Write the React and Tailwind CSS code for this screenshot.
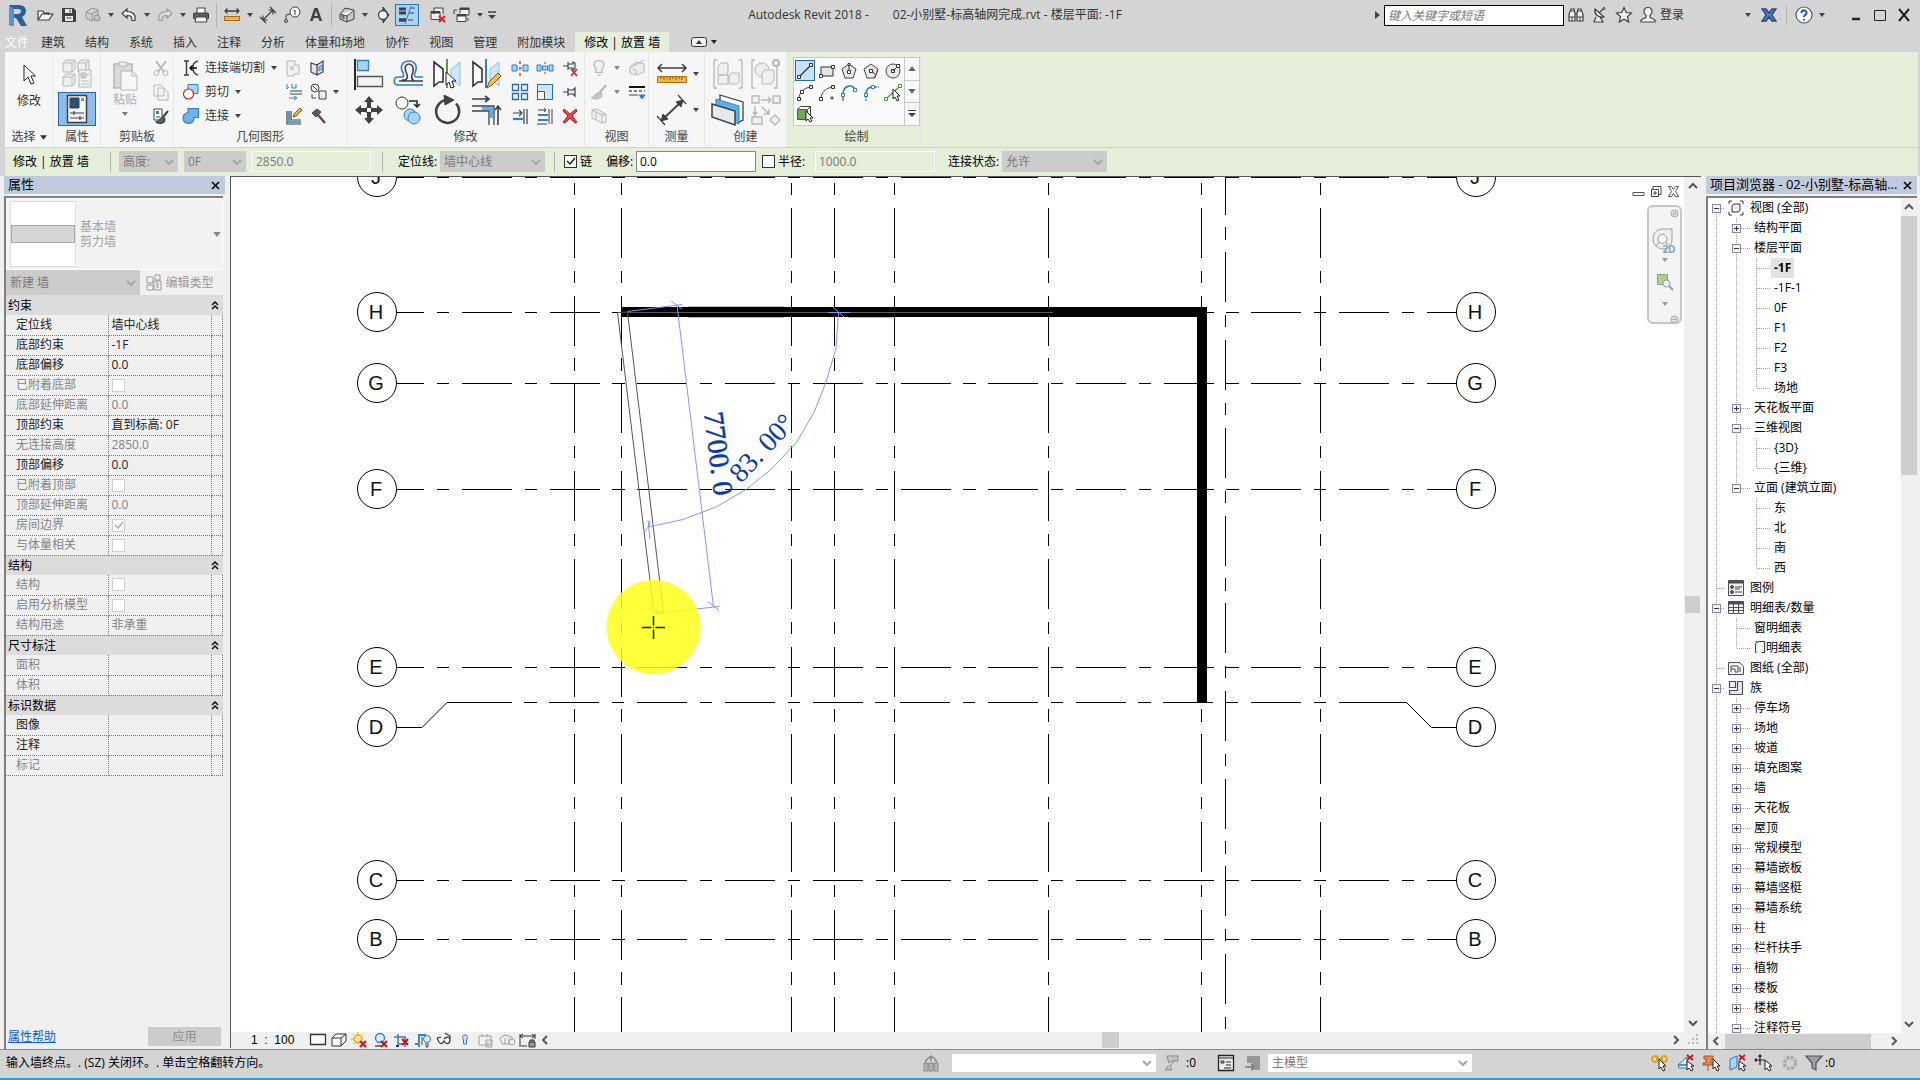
import React, { useState } from "react";

const DARK = "#3c4147";
const BLUE = "#2f7fc8";
const LIGHT = "#a9d4f2";
const GRAY = "#b4b7b9";

// every drawing is [width, height, content]
const icons = {
  logo: [22, 24, <g stroke="none"><path d="M3 2h9c5 0 8 2 8 6 0 3-2 5-4 6l5 9h-6l-5-8H8v8l-5-1z" fill="#2c5f9e" /><path d="M8 6h4c2 0 3 1 3 2s-1 3-3 3H8z" fill="#d4d4d4" /><path d="M3 2l5 4v17l-5-2z" fill="#5d92c8" /></g>],
  open: [18, 16, <path d="M2 13V4h5l1 2h5v2M2 13l4-6h11l-4 6z" fill="#f4f4f4" stroke={DARK} strokeWidth="1.2" />],
  save: [16, 16, <><path d="M1.500 1.500h11l2 2v11h-13z" fill={DARK} stroke={DARK} /><path d="M4 2h7v4H4zM4 9h8v5H4z" fill="#e8e8e8" stroke="none" /><path d="M9 2.500v3M5.500 11h5" stroke={DARK} /></>],
  sync: [18, 18, <><path d="M2 6l6-4 6 2v7l-6 4-6-3z" fill="#cfd0d0" stroke="#909396" /><path d="M2 6l6 2 6-4M8 8v7" stroke="#909396" /><circle cx="13" cy="12" r="3" fill="#c2c4c5" stroke="#8d9092" /></>],
  undo: [18, 16, <path d="M7 2L2 6.500 7 11V8.500c4 0 5 1 5 5h3c1-6-2-9-8-9z" fill="#f4f4f4" stroke={DARK} strokeWidth="1.2" />],
  redo: [18, 16, <path d="M11 2l5 4.500L11 11V8.500c-4 0-5 1-5 5H3c-1-6 2-9 8-9z" fill="#dcdcdc" stroke="#97999b" strokeWidth="1.100" />],
  print: [18, 18, <><path d="M5 7V2h8v5" fill="#fff" stroke={DARK} /><rect x="1.500" y="7" width="15" height="6" rx="1" fill="#5b6066" stroke={DARK} /><path d="M4 11h10l1 5H3z" fill="#f4f4f4" stroke={DARK} /></>],
  ruler: [18, 16, <><path d="M2 4h14M4.500 1.500L2 4l2.500 2.500M13.500 1.500L16 4l-2.500 2.500" stroke={DARK} strokeWidth="1.300" /><rect x="1.500" y="9.500" width="15" height="4" fill="#f0b23a" stroke="#a86f12" /></>],
  dim: [18, 18, <path d="M4 14L14 4M9.500 4H14v4.500M4 9.500V14h4.500M1 11l6 6M11 1l6 6" stroke={DARK} strokeWidth="1.200" />],
  tag: [18, 18, <><circle cx="12" cy="6" r="5" fill="#f6f6f6" stroke={DARK} /><path d="M10.500 5L12 4v5M7 8l-4 1v5" stroke={DARK} /><circle cx="3" cy="15" r="1.500" stroke={DARK} /></>],
  house: [18, 18, <><path d="M2 8l5-6 9 2v9l-7 3-7-3z" fill="#c5c9cc" stroke={DARK} /><path d="M2 8l7 2 7-6M9 10v6M4 9.500v2l2 1v-2z" stroke={DARK} fill="#fff" /></>],
  section: [18, 18, <><path d="M9 1l6 8-6 8z" fill={DARK} stroke={DARK} /><circle cx="9" cy="9" r="4.500" fill="#f2f2f2" stroke={DARK} strokeWidth="1.300" /></>],
  thin: [18, 18, <><path d="M1 3h7M1 7h7" stroke={DARK} strokeWidth="3" /><path d="M1 14h7" stroke={DARK} strokeWidth="3.500" /><path d="M12 2h5M11 7h5M10 14h5" stroke={DARK} /><path d="M13 0L7 18" stroke={BLUE} /></>],
  closeWin: [18, 18, <><path d="M5 8V2h9v6M2 5.500h9v8H2z" fill="#eee" stroke={DARK} /><path d="M2 6.500h9" stroke={DARK} strokeWidth="2" /><path d="M10 10l6 6M16 10l-6 6" stroke="#d8262c" strokeWidth="2.200" /></>],
  switchWin: [18, 18, <><path d="M7 7V2h9v7h-3" fill="#eee" stroke={DARK} /><path d="M4 8.500h9v7H4z" fill="#f7f7f7" stroke={DARK} /><path d="M7 3h9M4 9.500h9" stroke={DARK} strokeWidth="2" /><path d="M1 8V4h3M15 12v3" stroke={DARK} /></>],
  custom: [12, 12, <><path d="M2 3h8" stroke={DARK} strokeWidth="1.500" /><path d="M2 6h8l-4 4z" fill={DARK} stroke="none" /></>],
  binoculars: [18, 18, <><path d="M2 15V8l2-5h3l1 4v8zM16 15V8l-2-5h-3l-1 4v8z" fill="#eee" stroke={DARK} strokeWidth="1.200" /><path d="M8 8h2M2 11h6M10 11h6M4 5h3M11 5h3M5 11v4M13 11v4" stroke={DARK} /></>],
  dish: [18, 18, <><path d="M4 3c-1 5 3 9 9 8zM5 11l-2 5h9l-3-5M8 7l4-4" fill="#eee" stroke={DARK} strokeWidth="1.200" /><circle cx="13" cy="2.500" r="1" stroke={DARK} /></>],
  star: [18, 18, <path d="M9 1.500l2.200 5 5.300.5-4 3.600 1.200 5.400L9 13.200 4.300 16l1.200-5.400-4-3.600 5.300-.5z" fill="#eee" stroke={DARK} strokeWidth="1.200" />],
  user: [18, 18, <path d="M9 1.500c5 0 5 5.500 2 8v2l5 2.500v2H2v-2L7 11.500v-2c-3-2.500-3-8 2-8z" fill="#f1f1f1" stroke={DARK} strokeWidth="1.200" />],
  exchange: [18, 16, <path d="M2 2h4l3 4 3-4h4l-4 6 4 6h-4l-3-4-3 4H2l4-6z" fill="#5478b8" stroke="#22437f" strokeWidth="1.300" />],
  help: [20, 18, <><ellipse cx="10" cy="9" rx="8" ry="8" fill="#fff" stroke="#4b5a74" strokeWidth="1.200" /><path d="M7.500 7c0-4 5.500-3 5 0 0 1.500-2.500 2-2.500 4M10 13v1.500" stroke="#1f4fbf" strokeWidth="2" /></>],
  min: [12, 16, <path d="M2 12h8" stroke="#222" strokeWidth="2.500" />],
  max: [14, 14, <path d="M1.500 2.500h11v10h-11z" stroke="#222" />],
  close: [14, 14, <path d="M2 1l10 12M12 1L2 13" stroke="#222" strokeWidth="2" />],
  cursor: [14, 22, <path d="M2 1v16l4-4 3 7 3-1-3-7h4.500z" fill="#fff" stroke="#222" />],
  typeProps: [32, 32, <><path d="M2 5l3-3h9v9l-3 3H2zM17 5l3-3h8v9l-3 3h-8zM2 19l3-3h9v9l-3 3H2z" fill="#efefef" stroke={GRAY} /><path d="M2 5h9v9M11 5l3-3M17 5h8v9M25 5l3-3M2 19h9v9M11 19l3-3" stroke={GRAY} /><path d="M18 12h12v17H18z" fill="#f4f4f4" stroke={GRAY} /><path d="M20 15h5v5h-5z" fill="#cfcfcf" stroke={GRAY} /><path d="M20 23h8M20 26h8M27 15v3" stroke={GRAY} /></>],
  props: [22, 30, <><path d="M1.500 1.500h19v27h-19z" fill="#f7f7f7" stroke={DARK} strokeWidth="1.500" /><path d="M4 4h9v10H4z" fill="#2c5078" stroke={DARK} /><path d="M15 4h3v3h-3z" fill="#8a9095" stroke="none" /><path d="M4 19h14M4 24h14M8 17v4M14 22v4" stroke={DARK} strokeWidth="1.200" /></>],
  paste: [28, 32, <><path d="M3 4h18v24H3z" fill="#d9dadb" stroke={GRAY} strokeWidth="1.500" /><path d="M8 2h8v4H8z" fill="#eee" stroke={GRAY} /><path d="M10 11h11l5 5v14H10z" fill="#f7f7f7" stroke={GRAY} /><path d="M21 11v5h5" stroke={GRAY} /></>],
  cut: [18, 18, <><path d="M4 2l8 11M14 2L6 13" stroke={GRAY} strokeWidth="1.800" /><circle cx="4.500" cy="14" r="2.500" stroke={GRAY} /><circle cx="13.500" cy="14" r="2.500" stroke={GRAY} /></>],
  copyDoc: [18, 18, <path d="M2 2h7l3 3v8H2zM6 5h6l4 4v8H6z" fill="#f5f5f5" stroke={GRAY} />],
  brush: [18, 18, <><path d="M2 2h8v11H2z" fill="#fff" stroke={DARK} /><path d="M4 4h3v3H4z" fill={BLUE} stroke="none" /><path d="M4 10h4" stroke={DARK} /><path d="M16 4l-5 6" stroke={DARK} strokeWidth="2" /><path d="M11 10c-4 1-3 4-7 5 4 3 9 1 9-3z" fill="#5d6266" stroke={DARK} strokeWidth="1.200" /></>],
  cope: [18, 18, <><path d="M2 2h5M2 16h5M4.500 2v14M16 2c-5 1-5 4-5 7s1 6 5 7" stroke={DARK} strokeWidth="1.500" /><path d="M15 9H8M10.500 6.500L8 9l2.500 2.500" stroke="#111" strokeWidth="1.500" /></>],
  cutGeo: [18, 18, <><path d="M6 1.500h10v9H6z" fill={LIGHT} stroke={BLUE} /><circle cx="6.500" cy="11" r="5" fill="#fff" stroke="#d0242b" strokeWidth="1.200" /></>],
  joinGeo: [18, 18, <path d="M6 1.500h10.500v9H12a5.500 5.500 0 1 1-6-5z" fill="#6db4e6" stroke={BLUE} strokeWidth="1.200" />],
  unjoin: [18, 18, <path d="M2 2h8v4h4v9H9v2H2zM5 9l3-2v4z" fill="#f0f0f0" stroke={GRAY} />],
  face: [18, 18, <><path d="M2 4l6 2v10l-6-3zM8 6l6-4v11l-6 3" fill="#e8e8e8" stroke={DARK} strokeWidth="1.200" /><path d="M10 8l3-2v4l-3 2z" fill={LIGHT} stroke={BLUE} /></>],
  beam: [18, 18, <><path d="M2 1v5M2 6l2-2M7 1v4h4V1" stroke={BLUE} /><path d="M5 8h12M5 11h12" stroke={DARK} /><path d="M4 15h8M9 13l3 2-3 2" stroke={BLUE} /></>],
  paint: [18, 18, <><circle cx="6" cy="5" r="4" fill="#eee" stroke={DARK} /><path d="M4 3l4 4M10 8h7v8h-7z" fill="#eee" stroke={DARK} /><path d="M3 11v4h4" stroke={DARK} /></>],
  wallJoin: [18, 18, <><path d="M2 4v13h14M6 4v9h10" stroke={DARK} strokeWidth="1.200" /><path d="M4 4v11h12" stroke={BLUE} strokeWidth="1.600" /><path d="M8 10l1-3 6-6 2 2-6 6z" fill="#f0b23a" stroke="#8a5a10" /></>],
  hammer: [18, 18, <><path d="M3 6l5-4 4 3-5 5z" fill="#55595d" stroke={DARK} /><path d="M9 8l7 8" stroke="#6a3b34" strokeWidth="2.200" /></>],
  align: [32, 32, <><path d="M2 1v31" stroke="#111" strokeWidth="1.800" /><path d="M4.500 2.500h11v10h-11z" fill={LIGHT} stroke={BLUE} strokeWidth="1.300" /><path d="M4.500 18.500h25v10h-25z" fill="#f2f2f2" stroke="#555" strokeWidth="1.300" /></>],
  offset: [32, 32, <><path d="M31 27H6c-5 0-5-8 0-8h4c2 0 2-2 1-4-4-7 0-12 6-12s9 5 6 12c-1 2-1 4 2 4h6" stroke={BLUE} strokeWidth="1.600" /><path d="M31 23H7M10 22h3c3-1 3-4 1-8-2-5 0-8 3-8s5 3 4 8c-2 4-2 7 1 9h9" stroke={DARK} strokeWidth="1.600" /></>],
  mirrorPick: [32, 32, <><path d="M3 4l9 7v13H8l-5 4z" fill="#fafafa" stroke="#333" strokeWidth="1.600" /><path d="M29 4l-9 7v13h4l5 4z" fill="#cfe6f7" stroke="#8cc0e6" /><path d="M16 1v29" stroke="#5a9b3c" strokeWidth="2" /><path d="M15 14v13l3-3 2 6 3-1-2-6h4z" fill="#fff" stroke="#222" /></>],
  mirrorDraw: [32, 32, <><path d="M3 4l9 7v13H8l-5 4z" fill="#fafafa" stroke="#333" strokeWidth="1.600" /><path d="M29 4l-9 7v13h4l5 4z" fill="#cfe6f7" stroke="#8cc0e6" /><path d="M16 1v29" stroke={BLUE} strokeWidth="2" /><path d="M17 30l2-6 9-9 3 3-9 9z" fill="#f3c13e" stroke="#7d5212" /></>],
  move: [30, 30, <><path d="M15 1l5 6h-3v5h-4V7h-3zM15 29l5-6h-3v-5h-4v5h-3zM1 15l6-5v3h5v4H7v3zM29 15l-6-5v3h-5v4h5v3z" fill={DARK} stroke="none" /><path d="M12.500 12.500h5v5h-5z" fill="#f6f6f6" stroke={DARK} /></>],
  copy: [30, 30, <><circle cx="9" cy="8" r="6" fill="#fafafa" stroke="#333" /><path d="M16 6h8v5M21 9l3 3 3-3" stroke="#222" strokeWidth="1.500" /><circle cx="17" cy="20" r="6" fill={LIGHT} stroke={BLUE} /><circle cx="21" cy="23" r="6" fill={LIGHT} stroke={BLUE} /></>],
  rotate: [30, 30, <><path d="M17 5A11.500 11.500 0 1 0 24 8.500" stroke={DARK} strokeWidth="2.500" /><path d="M12 0l10 5-9 5z" fill={DARK} stroke={DARK} /></>],
  trim: [32, 32, <><path d="M2 5h17M15 2l4 3-4 3M28 31V12M25 16l3-4 3 4" stroke={DARK} strokeWidth="1.600" /><path d="M2 12h22v19M2 17h17v14" stroke={DARK} strokeWidth="1.300" /><path d="M12 14.500h9.500V24" stroke="#5fb0ea" strokeWidth="3" /></>],
  split: [18, 18, <><path d="M1 6h5v6H1zM12 6h5v6h-5z" fill={LIGHT} stroke={BLUE} /><path d="M9 2v3M9 8v3M9 14v3" stroke="#d0242b" strokeWidth="1.300" /><path d="M6 9h6" stroke={BLUE} strokeDasharray="1 1" /></>],
  splitGap: [18, 18, <><path d="M1 6h4v6H1zM13 6h4v6h-4zM6.500 7h5v4h-5z" fill={LIGHT} stroke={BLUE} /><path d="M9 3v2M9 13v2" stroke="#d0242b" /></>],
  unpin: [18, 18, <><path d="M2 7h5M7 3v8M7 5h5V3l2 1v6l-2 1V9H7" fill="#eee" stroke={DARK} strokeWidth="1.100" /><path d="M10 10l6 7M16 10l-6 7" stroke="#d8262c" strokeWidth="1.800" /></>],
  array: [18, 18, <path d="M1.500 1.500h6v6h-6zM10.500 1.500h6v6h-6zM1.500 10.500h6v6h-6zM10.500 10.500h6v6h-6z" fill="#e3f1fb" stroke="#2b6ca8" strokeWidth="1.300" />],
  scale: [18, 18, <><path d="M1.500 1.500h15v15h-15z" fill="#cfe6f7" stroke="#2b6ca8" /><path d="M1.500 8.500h7v8h-7z" fill="#f7f7f7" stroke="#555" /></>],
  pin: [18, 18, <path d="M2 9h5M7 5v8M7 7h5l2-2v8l-2-2H7" fill="#eee" stroke={DARK} strokeWidth="1.200" />],
  trimOne: [18, 18, <><path d="M2 6h8M8 3l3 3-3 3M13 2v15M16 2v15" stroke={DARK} strokeWidth="1.200" /><path d="M2 12h10" stroke={BLUE} strokeWidth="2.200" /></>],
  trimMany: [18, 18, <><path d="M2 3h8M8 1l2 2-2 2M13 2v15M16 2v15M1 17h10" stroke={DARK} /><path d="M2 8h10M2 13h10" stroke={BLUE} strokeWidth="2" /></>],
  del: [18, 18, <path d="M3 2l6 5 6-5 1 2-5 5 5 6-2 1-5-5-5 5-2-1 5-6-5-5z" fill="#ef4047" stroke="#b7191f" />],
  bulb: [18, 18, <path d="M9 1.500c6 0 6 6 3 8v4H6v-4c-3-2-3-8 3-8zM7 16h4" fill="#f0f0f0" stroke={GRAY} strokeWidth="1.200" />],
  hide: [18, 18, <path d="M2 8l6-5 8 2v8l-7 3-7-2zM5 12c0-3 3-3 3 0v3M16 1L3 8" fill="#eee" stroke={GRAY} />],
  paintGray: [18, 18, <><path d="M16 2l-6 7" stroke={GRAY} strokeWidth="2.200" /><path d="M10 9c-5 1-4 4-8 6 5 2 10 0 10-4z" fill="#c7c9ca" stroke={GRAY} strokeWidth="1.200" /></>],
  linework: [18, 18, <><path d="M1 4h16" stroke="#111" strokeWidth="2" /><path d="M1 8h16" stroke="#111" strokeDasharray="3 2" /><path d="M11 12h6l-3 4z" fill={BLUE} stroke={BLUE} /><path d="M1 12h9" stroke={DARK} /></>],
  box: [18, 18, <path d="M2 3l10 5v8L2 11zM2 3l4-1 10 5v8l-4 1M12 8l4-1M6 5v8" fill="#f0f0f0" stroke={GRAY} />],
  measure: [32, 32, <><path d="M2 10h28M6 6l-4 4 4 4M26 6l4 4-4 4" stroke={DARK} strokeWidth="1.600" /><path d="M1.500 18.500h29v6h-29z" fill="#f2b63d" stroke="#a86f12" /><path d="M5 19v2M8 19v3M11 19v2M14 19v3M17 19v2M20 19v3M23 19v2M26 19v3" stroke="#8a5a10" /></>],
  dimBig: [32, 32, <><path d="M6 26L26 7" stroke={DARK} strokeWidth="1.800" /><path d="M27 6l-2 7-5-5zM5 27l2-7 5 5z" fill={DARK} stroke={DARK} /><path d="M1 22l8 9M22 1l8 9" stroke={DARK} strokeWidth="1.200" /></>],
  group: [32, 32, <><path d="M5 2H2v28h3M27 2h3v28h-3" stroke={GRAY} strokeWidth="1.300" /><path d="M6 8l3-3h7v10l-2 2H6zM6 18l3-1h7v9H6zM17 17l3-2h7v9l-2 2h-8z" fill="#f0f0f0" stroke={GRAY} /></>],
  similar: [32, 32, <><path d="M5 2H2v28h3M27 8v22h-3" stroke={GRAY} strokeWidth="1.300" /><circle cx="12" cy="12" r="7" fill="#eee" stroke={GRAY} /><path d="M12 15l3-3h9v11l-3 3h-9z" fill="#f0f0f0" stroke={GRAY} /><circle cx="26" cy="5" r="3" stroke={GRAY} strokeWidth="2" /></>],
  assembly: [34, 34, <><path d="M9 2l23 7v18l-4 2L9 20z" fill="#fafafa" stroke={DARK} strokeWidth="1.300" /><path d="M5 6l23 7v18L5 22z" fill="#5fb0ea" stroke={BLUE} /><path d="M1 11l23 7v14L1 24z" fill="#e6e9ec" stroke={DARK} strokeWidth="1.500" /></>],
  parts: [32, 32, <path d="M2 2h7v7H2zM23 2h7v7h-7zM2 23h10v7H2zM25 21l5 5-5 5-5-5zM11 6h10M18 3l3 3-3 3M5 12v9M3 18l2 3 2-3M12 13l7 7M19 15v5h-5" fill="#f0f0f0" stroke={GRAY} strokeWidth="1.400" />],
  line: [18, 18, <><path d="M3 15L15 3" stroke="#333" strokeWidth="1.200" /><path d="M1.500 13.500h3v3h-3zM13.500 1.500h3v3h-3z" fill="#fff" stroke="#333" /></>],
  rect: [18, 18, <><path d="M3 5h12v9H3z" fill="#e3e5e7" stroke="#333" /><path d="M1.500 12.500h3v3h-3zM13.500 3.500h3v3h-3z" fill="#fff" stroke="#333" /></>],
  polyIn: [18, 18, <><path d="M9 2l7 5-3 9H5L2 7z" fill="#e6e8ea" stroke="#444" /><path d="M9 9V3M7.500 8.500h3v3h-3zM8 1.500h2v2H8z" stroke="#333" fill="#fff" /></>],
  polyOut: [18, 18, <><path d="M9 2l7 5-3 9H5L2 7z" fill="#e6e8ea" stroke="#444" /><path d="M7.500 7.500h3v3h-3zM10 10l3 2" stroke="#333" fill="#fff" /><path d="M12 16l4-8" stroke="#d0242b" /></>],
  circle: [18, 18, <><circle cx="9" cy="9" r="7" fill="#e6e8ea" stroke="#444" /><path d="M9 9l4-4M7.500 7.500h3v3h-3zM12.500 2.500h3v3h-3z" stroke="#333" fill="#fff" /></>],
  arc3: [18, 18, <><path d="M3 15C3 9 7 4 15 3" stroke="#444" /><path d="M1.500 13.500h3v3h-3zM4.500 6.500h3v3h-3zM13.500 1.500h3v3h-3z" fill="#fff" stroke="#333" /></>],
  arcC: [18, 18, <><path d="M3 15C3 9 7 4 15 3M14 12v4M12 14h4" stroke="#444" /><path d="M1.500 13.500h3v3h-3zM13.500 1.500h3v3h-3z" fill="#fff" stroke="#333" /></>],
  arcT: [18, 18, <><path d="M3 11C3 0 14 0 15 6" stroke={BLUE} strokeWidth="1.600" /><path d="M3 12v5" stroke="#333" /><path d="M1.500 9.500h3v3h-3zM13.500 4.500h3v3h-3z" fill="#fff" stroke={BLUE} /></>],
  fillet: [18, 18, <><path d="M4 11c0-6 2-8 8-8" stroke={BLUE} strokeWidth="1.600" /><path d="M4 12v5M13 3h4" stroke="#333" strokeDasharray="2 1" /><path d="M2.500 9.500h3v3h-3zM9.500 1.500h3v3h-3z" fill="#fff" stroke={BLUE} /></>],
  pick: [18, 18, <><path d="M2 15L16 2" stroke="#5aa53c" strokeWidth="1.600" /><path d="M.5 13.500h3v3h-3zM14.500.5h3v3h-3z" fill="#fff" stroke="#4b9130" /><path d="M9 5v10l2-2 2 4 2-1-2-4h3z" fill="#fff" stroke="#222" /></>],
  pickFace: [18, 18, <><path d="M1.500 4.500h10v10h-10z" fill="#6fa84f" stroke="#3d6e25" /><path d="M1.500 4.500l3-3h10v10l-3 3M11.500 4.500l3-3" stroke="#444" /><path d="M10 6v10l2-2 2 3 2-1-2-3h3z" fill="#fff" stroke="#222" /></>],
  editType: [18, 18, <path d="M2 3h6v6H2zM10 1h5v5h-5zM2 11h6v5H2zM9 7h7v9H9zM11 9h2v2h-2M11 13h3" stroke="#9a9a9a" />],
  views: [16, 16, <><path d="M1 4V1h3M12 1h3v3M15 12v3h-3M4 15H1v-3" stroke="#333" /><path d="M4 6l2-2h6v6l-2 2H4z" fill="#eee" stroke="#333" /></>],
  legend: [16, 16, <><path d="M.5.5h15v15H.5z" fill="#f2f2f2" stroke="#4a4e58" /><path d="M0 2h16" stroke="#4a4e58" strokeWidth="3" /><circle cx="4" cy="7" r="1.500" fill="#666" stroke="#444" /><circle cx="4" cy="12" r="1.500" fill="#666" stroke="#444" /><path d="M7 7h7M7 9h5M7 12h7" stroke="#444" /></>],
  schedule: [16, 14, <><path d="M.5.500h15v12H.5zM.5 6.500h15M.5 9.500h15M5.500 3v10M10.500 3v10" fill="#fff" stroke="#4a4e58" /><path d="M0 2h16" stroke="#4a4e58" strokeWidth="3" /></>],
  sheet: [16, 14, <><path d="M.5 1.500h11l4 4v8H.5z" fill="#f2f2f2" stroke="#4a4e58" /><path d="M3 11V5h7v6H7V8H3M12 6v5" stroke="#4a4e58" /></>],
  family: [16, 16, <><path d="M1.500 1.500h6v6h-6z" fill="#f2f2f2" stroke="#4a4e58" strokeWidth="1.200" /><path d="M9.500 1.500h5v13h-13v-4h8z" fill="#e6e6ee" stroke="#4a4e58" strokeWidth="1.200" /></>],
  detail: [18, 14, <path d="M1.500 1.500h15v10h-15z" fill="#fafafa" stroke="#333" strokeWidth="1.300" />],
  style: [16, 16, <path d="M1 6h9v8H1zM1 6l4-4h10l-5 4M15 2v7l-5 5" fill="#fafafa" stroke="#333" />],
  sun: [18, 18, <><circle cx="7" cy="7" r="4" fill="#ffe79a" stroke="#e8a317" strokeWidth="1.500" /><path d="M7 0v2M0 7h2M2 2l1 1M12 2l-1 1M2 12l1-1" stroke="#e8a317" /><path d="M9 9l6 6M15 9l-6 6" stroke="#c8161d" strokeWidth="2.200" /></>],
  shadow: [18, 18, <><circle cx="8" cy="6" r="4.500" fill="#d6ecfa" stroke={BLUE} strokeWidth="1.300" /><path d="M3 14h6" stroke="#777" strokeWidth="2" /><path d="M9 9l6 6M15 9l-6 6" stroke="#c8161d" strokeWidth="2.200" /></>],
  crop: [18, 18, <><path d="M5 2v10h10M1 5h11v10" stroke={BLUE} strokeWidth="1.500" /><path d="M3 14h3" stroke="#333" strokeWidth="2" /><path d="M9 7l6 6M15 7l-6 6" stroke="#c8161d" strokeWidth="2.200" /></>],
  cropShow: [18, 18, <><path d="M5 15V3h7M1 12h3" stroke={BLUE} strokeWidth="1.800" /><circle cx="13" cy="7" r="3.500" fill="#d6ecfa" stroke={BLUE} /><path d="M12 11v4h2v-4M8 5v8" stroke="#444" /></>],
  glasses: [18, 16, <path d="M2 6l2 4c2 3 4 1 5-1 2 4 6 3 6-1 0-3-3-4-6-1M2 6l4-1M15 8V4l-5-3" stroke="#333" strokeWidth="1.200" />],
  reveal: [12, 16, <path d="M6 3c3 0 3 3 1.500 5v4h-3V8C3 6 3 3 6 3z" fill="#c9e2f8" stroke="#3f74b8" />],
  tmp: [18, 18, <path d="M2 4h12v9H2zM5 2v3M10 2v3M9 8h6v7H9zM11 10v3" stroke="#a0a0a0" />],
  tmp2: [18, 18, <><path d="M2 6l5-3 7 2v7H4zM7 6v6M11 6v6" stroke="#a0a0a0" /><circle cx="14" cy="10" r="3" fill="#eee" stroke="#a0a0a0" /></>],
  constrain: [18, 18, <><path d="M1 2v13M16 2v5M1 4h15M4 2L1 4l3 2M13 2l3 2-3 2M2 14h6" stroke="#333" /><path d="M10 10h6v5h-6zM11 10V8h4v2" fill="#999" stroke="#333" /></>],
  users: [18, 18, <><path d="M2 9h4v8H2zM7 9h4v8H7zM12 9h4v8h-4z" fill="#b5b5b5" stroke="#888" /><path d="M3 8l2-3 2-1 2-2 3 2 3 4M9 2v5" stroke="#888" strokeWidth="1.500" /></>],
  request: [16, 18, <path d="M3 2h11v5H7L5 9zM4 12l-3 4h7l-2-4 4-5" fill="#c4c4c4" stroke="#888" />],
  options: [18, 18, <><path d="M1.500 1.500h15v15h-15z" fill="#eee" stroke="#222" strokeWidth="1.300" /><path d="M2 4h14M4 7h3v2H4zM9 8h5M9 11h5M7 14h7" stroke="#222" /></>],
  design: [18, 18, <><path d="M4 2h13v14H9V9H4z" fill="#979797" stroke="none" /><path d="M2 13h8M8 10l3 3-3 3" stroke="#777" strokeWidth="1.300" /></>],
  selLink: [20, 18, <><circle cx="5" cy="5" r="3" stroke="#d9a514" strokeWidth="1.800" /><circle cx="14" cy="5" r="3" stroke="#d9a514" strokeWidth="1.800" /><path d="M6 5h7" stroke="#d9a514" strokeWidth="2" /><path d="M9 5v10l2-2 2 4 2-1-2-4h3z" fill="#fff" stroke="#222" /></>],
  selUnder: [20, 18, <><path d="M2 11l9-8v8zM2 11h13l-4 3H3z" fill="#dcebf6" stroke="#3679b0" /><path d="M11 1l6 5M17 1l-6 5" stroke="#c8161d" strokeWidth="1.800" /><path d="M11 7v9l2-2 2 3 2-1-2-4h3z" fill="#fff" stroke="#222" /></>],
  selPin: [20, 18, <><path d="M2 2h9v3H9v4h3v2H1V9h3V5H2zM6 11v6" fill="#e58b52" stroke="#b4531b" /><path d="M11 5v10l2-2 2 4 2-1-2-4h3z" fill="#fff" stroke="#222" /></>],
  selFace: [20, 18, <><path d="M2 5l7-3v11l-7 3z" fill="#a9d4f2" stroke="#3679b0" /><path d="M11 1l6 5M17 1l-6 5" stroke="#c8161d" strokeWidth="1.800" /><path d="M11 7v9l2-2 2 3 2-1-2-4h3z" fill="#fff" stroke="#222" /></>],
  drag: [20, 18, <><path d="M6 1v10M1 6h10M4.500 2.500L6 1l1.500 1.500M2.500 4.500L1 6l1.500 1.500" stroke="#222" strokeWidth="1.200" /><path d="M11 6v10l2-2 2 3 2-1-2-4h3z" fill="#fff" stroke="#222" /></>],
  gear: [18, 18, <circle cx="9" cy="9" r="5.500" stroke="#aaa" strokeWidth="3.500" strokeDasharray="3 1.300" />],
  funnel: [20, 18, <path d="M2 2h16l-6 7v7l-4-2V9z" fill="#9ba0a5" stroke="#50565c" strokeWidth="1.200" />],
  wheel: [30, 28, <><path d="M3 13C3 6 8 3 13 3h9v10c0 7-4 10-9 10S3 19 3 13z" fill="#eee" stroke="#9c9c9c" /><circle cx="12.500" cy="13" r="4.500" fill="#fafafa" stroke="#9c9c9c" /><path d="M9 16l-3 4M16 16l2 3" stroke="#9c9c9c" /></>],
  zoomRegion: [18, 18, <><path d="M1.500 1.500h10v10h-10z" fill="#a9cf95" stroke="#7fae68" /><circle cx="10.500" cy="10.500" r="3.500" fill="#f0f0f0" stroke="#999" /><path d="M13 13l4 4" stroke="#999" strokeWidth="1.800" /></>],
};

function Icon({ name }) {
  const [w, h, content] = icons[name];
  return (
    <svg width={w} height={h} viewBox={`0 0 ${w} ${h}`} fill="none" className="shrink-0" aria-hidden="true">
      {content}
    </svg>
  );
}

function Caret({ className = "", color = "#444" }) {
  return (
    <button aria-label="更多" className={`grid w-3 shrink-0 place-items-center ${className}`}>
      <svg width="6" height="4" viewBox="0 0 6 4"><path d="M0 0h6L3 4z" fill={color} /></svg>
    </button>
  );
}

function Tool({ name, className = "size-6" }) {
  return (
    <button aria-label={name} className={`grid shrink-0 place-items-center ${className}`}>
      <Icon name={name} />
    </button>
  );
}

function Chevron({ dir = "down", color = "#555" }) {
  const paths = { down: "M1 3l4 4 4-4", up: "M1 7l4-4 4 4", left: "M7 1L3 5l4 4", right: "M3 1l4 4-4 4" };
  return (
    <svg width="10" height="10" viewBox="0 0 10 10" fill="none">
      <path d={paths[dir]} stroke={color} strokeWidth="2" />
    </svg>
  );
}

function Divider({ className = "" }) {
  return <span className={`w-px shrink-0 bg-[#b0b4ac] ${className}`} />;
}

function Select({ label, value, className, bg = "bg-[#cccccc]" }) {
  return (
    <span className={`grid shrink-0 items-center ${className}`}>
      <select aria-label={label} className={`col-start-1 row-start-1 h-full w-full appearance-none pl-1 text-[#7a7a7a] ${bg}`}>
        <option>{value}</option>
      </select>
      <span className="pointer-events-none col-start-1 row-start-1 mr-1 justify-self-end">
        <Chevron color="#a6a6a6" />
      </span>
    </span>
  );
}

function Check({ label, checked, id, className = "border-[#333]", color = "#222" }) {
  const [on, setOn] = useState(!!checked);
  return (
    <span className="grid size-[13px] shrink-0">
      <input
        type="checkbox"
        id={id}
        aria-label={label}
        checked={on}
        onChange={() => setOn(!on)}
        className={`col-start-1 row-start-1 size-[13px] appearance-none border bg-white ${className}`}
      />
      {on && (
        <svg width="13" height="13" viewBox="0 0 13 13" fill="none" className="pointer-events-none col-start-1 row-start-1">
          <path d="M3 6l3 3 5-6" stroke={color} strokeWidth="1.500" />
        </svg>
      )}
    </span>
  );
}

function TitleBar() {
  return (
    <header className="flex h-8 shrink-0 items-center pb-[2px]">
      <Tool name="logo" className="h-7 w-[33px]" />
      <Tool name="open" />
      <Tool name="save" />
      <Tool name="sync" />
      <Caret />
      <Tool name="undo" />
      <Caret />
      <Tool name="redo" />
      <Caret />
      <Tool name="print" />
      <Divider className="mx-[3px] h-6" />
      <Tool name="ruler" />
      <Caret />
      <Tool name="dim" />
      <Tool name="tag" />
      <button aria-label="文字" className="w-6 text-center font-['Liberation_Sans'] text-lg font-bold text-[#3c4147]">A</button>
      <Divider className="mx-[3px] h-6" />
      <Tool name="house" />
      <Caret />
      <Tool name="section" />
      <Tool name="thin" className="h-[22px] w-6 border border-[#2a76c0] bg-[#a8d3f5]" />
      <Tool name="closeWin" className="ml-[7px] size-6" />
      <Tool name="switchWin" />
      <Caret />
      <Tool name="custom" className="size-3" />
      <h1 className="min-w-0 flex-1 truncate text-center text-[#333]">
        Autodesk Revit 2018 -<span className="ml-6">02-小别墅-标高轴网完成.rvt - 楼层平面: -1F</span>
      </h1>
      <button aria-label="展开" className="grid w-3 place-items-center">
        <svg width="5" height="8" viewBox="0 0 5 8"><path d="M0 0v8l5-4z" fill="#444" /></svg>
      </button>
      <input
        type="text"
        aria-label="搜索"
        placeholder="键入关键字或短语"
        className="h-[21px] w-[180px] border border-black bg-white px-[3px] italic placeholder:text-[#777]"
      />
      <Tool name="binoculars" />
      <Tool name="dish" />
      <Tool name="star" />
      <Tool name="user" />
      <a href="#login" className="shrink-0 text-[#333]">登录</a>
      <Caret className="ml-[58px]" />
      <Tool name="exchange" className="ml-[3px] size-6" />
      <Divider className="mx-[5px] h-5" />
      <Tool name="help" />
      <Caret />
      <Tool name="min" className="ml-4 size-6" />
      <Tool name="max" />
      <Tool name="close" className="mr-1 size-6" />
    </header>
  );
}

const tabs = ["建筑", "结构", "系统", "插入", "注释", "分析", "体量和场地", "协作", "视图", "管理", "附加模块"];

function Tabs() {
  return (
    <nav className="flex h-5 shrink-0 items-stretch leading-[22px] text-[#333]">
      <button className="pr-[2px] pl-[5px] text-white">文件</button>
      {tabs.map((t) => (
        <button key={t} className="px-[10px] whitespace-nowrap">{t}</button>
      ))}
      <button className="bg-[#e4eed9] px-[9px] whitespace-nowrap text-black">修改 | 放置 墙</button>
      <button aria-label="最小化功能区" className="ml-[22px] flex items-center gap-1">
        <svg width="16" height="10" viewBox="0 0 16 10" fill="none">
          <rect x=".5" y=".5" width="15" height="9" rx="2" fill="#f2f2f2" stroke="#333" />
          <path d="M5 7l3-4 3 4z" fill="#333" />
        </svg>
        <svg width="6" height="4" viewBox="0 0 6 4"><path d="M0 0h6L3 4z" fill="#222" /></svg>
      </button>
    </nav>
  );
}

function Panel({ title, className, children }) {
  return (
    <section className={`flex h-full shrink-0 flex-col border-r border-[#e6e8e4] ${className}`}>
      <div className="flex min-h-0 flex-1 pt-1">{children}</div>
      <h2 className="flex h-5 shrink-0 items-start justify-center leading-5 text-[#444]">{title}</h2>
    </section>
  );
}

function Ribbon() {
  return (
    <div className="mr-[2px] ml-[5px] flex h-24 shrink-0 border-b border-[#cdd2d0] bg-[#e4eed9]">
      <div className="flex bg-[#f5f6f5]">
        <Panel title={<>选择<span className="ml-1 self-center"><svg width="7" height="5" viewBox="0 0 6 4"><path d="M0 0h6L3 4z" fill="#333" /></svg></span></>} className="w-[49px]">
          <button className="flex flex-1 flex-col items-center gap-[7px] pt-2 text-[#333]">
            <Icon name="cursor" />
            修改
          </button>
        </Panel>
        <Panel title="属性" className="w-[47px]">
          <div className="flex flex-1 flex-col items-center">
            <Tool name="typeProps" className="h-9 w-[38px]" />
            <Tool name="props" className="h-[34px] w-[38px] border border-[#2a66a8] bg-[#8dbcec]" />
          </div>
        </Panel>
        <Panel title="剪贴板" className="w-[73px]">
          <button className="flex w-12 flex-col items-center pt-1 text-[#aeb0b2]">
            <Icon name="paste" />
            粘贴
            <svg width="6" height="4" viewBox="0 0 6 4" className="mt-1"><path d="M0 0h6L3 4z" fill="#777" /></svg>
          </button>
          <div>
            <Tool name="cut" />
            <Tool name="copyDoc" />
            <Tool name="brush" />
          </div>
        </Panel>
        <Panel title="几何图形" className="w-[173px]">
          <div className="w-[108px] pl-[6px] text-[#333]">
            {[["cope", "连接端切割"], ["cutGeo", "剪切"], ["joinGeo", "连接"]].map(([icon, text]) => (
              <div key={icon} className="flex h-6 items-center">
                <Tool name={icon} className="h-6 w-[22px]" />
                <button className="mx-[3px] whitespace-nowrap">{text}</button>
                <Caret />
              </div>
            ))}
          </div>
          <div className="grid grid-cols-[24px_24px_12px] content-start">
            <Tool name="unjoin" />
            <Tool name="face" />
            <span />
            <Tool name="beam" />
            <Tool name="paint" />
            <Caret />
            <Tool name="wallJoin" />
            <Tool name="hammer" />
          </div>
        </Panel>
        <Panel title="修改" className="w-[238px]">
          <div className="grid grid-cols-4 content-start pl-[2px]">
            {["align", "offset", "mirrorPick", "mirrorDraw", "move", "copy", "rotate", "trim"].map((n) => (
              <Tool key={n} name={n} className="h-9 w-[39px]" />
            ))}
          </div>
          <div className="ml-[2px] grid grid-cols-3 content-start">
            {["split", "splitGap", "unpin", "array", "scale", "pin", "trimOne", "trimMany", "del"].map((n) => (
              <Tool key={n} name={n} className="h-6 w-[25px]" />
            ))}
          </div>
        </Panel>
        <Panel title="视图" className="w-16">
          <div className="grid grid-cols-[24px_14px_24px] content-start pl-[2px]">
            <Tool name="bulb" />
            <Caret color="#888" />
            <Tool name="hide" />
            <Tool name="paintGray" />
            <Caret color="#888" />
            <Tool name="linework" />
            <Tool name="box" />
          </div>
        </Panel>
        <Panel title="测量" className="w-14">
          <div className="grid grid-cols-[36px_12px] content-start pl-[5px]">
            <Tool name="measure" className="h-9 w-9" />
            <Caret />
            <Tool name="dimBig" className="h-9 w-9" />
            <Caret />
          </div>
        </Panel>
        <Panel title="创建" className="w-[82px]">
          <div className="grid grid-cols-2 content-start pl-1">
            {["group", "similar", "assembly", "parts"].map((n) => (
              <Tool key={n} name={n} className="h-9 w-[38px]" />
            ))}
          </div>
        </Panel>
      </div>
      <Panel title="绘制" className="ml-[6px] w-[128px]">
        <div className="mt-px flex h-[69px] w-[127px] border border-[#c4c8cc] bg-[#f8f9f8]">
          <div className="grid flex-1 grid-cols-5 content-start pt-px">
            <Tool name="line" className="m-px h-[21px] w-5 border border-[#2a66a8] bg-[#c4e2f8]" />
            {["rect", "polyIn", "polyOut", "circle", "arc3", "arcC", "arcT", "fillet", "pick", "pickFace"].map((n) => (
              <Tool key={n} name={n} className="h-[21px] w-[22px] self-center" />
            ))}
          </div>
          <div className="flex w-[15px] flex-col divide-y divide-[#c4c8cc] border-l border-[#c4c8cc]">
            <button aria-label="上一行" className="grid flex-1 place-items-center"><svg width="8" height="5" viewBox="0 0 6 4"><path d="M0 4h6L3 0z" fill="#666" /></svg></button>
            <button aria-label="下一行" className="grid flex-1 place-items-center"><svg width="8" height="5" viewBox="0 0 6 4"><path d="M0 0h6L3 4z" fill="#666" /></svg></button>
            <button aria-label="展开" className="grid flex-1 place-items-center"><svg width="8" height="8" viewBox="0 0 8 8"><path d="M0 0h8v1H0zM0 3h8L4 7z" fill="#444" /></svg></button>
          </div>
        </div>
      </Panel>
    </div>
  );
}

function OptionsBar() {
  return (
    <div className="mr-[2px] ml-[5px] flex h-7 shrink-0 items-center bg-[#e4eed9] pb-px pl-2 whitespace-nowrap text-black">
      <span className="w-[97px]">修改 | 放置 墙</span>
      <Divider className="mr-2 h-5" />
      <Select label="高度" value="高度:" className="h-[21px] w-[59px]" />
      <Select label="标高" value="0F" className="ml-[6px] h-[21px] w-[62px]" />
      <input aria-label="高度值" defaultValue="2850.0" className="ml-[6px] h-[21px] w-[119px] border border-white bg-[#e4eed9] px-[3px] text-[#7a7a7a]" />
      <Divider className="mx-[11px] h-5" />
      <span className="mx-1 w-[38px]">定位线:</span>
      <Select label="定位线" value="墙中心线" className="h-[21px] w-[105px]" />
      <Divider className="mx-[9px] h-5" />
      <Check id="chain" checked />
      <label htmlFor="chain" className="ml-[3px] w-[26px]">链</label>
      <label htmlFor="offset" className="w-[30px]">偏移:</label>
      <input id="offset" defaultValue="0.0" className="h-[21px] w-[120px] border border-[#888] bg-white px-[3px]" />
      <span className="w-[6px]" />
      <Check id="radius" />
      <label htmlFor="radius" className="ml-[3px] w-[37px]">半径:</label>
      <input aria-label="半径值" defaultValue="1000.0" className="h-[21px] w-[120px] border border-white bg-[#e4eed9] px-[3px] text-[#7a7a7a]" />
      <span className="ml-[13px] w-[54px]">连接状态:</span>
      <Select label="连接状态" value="允许" className="h-[21px] w-[105px]" />
    </div>
  );
}

function PaletteHeader({ title }) {
  return (
    <div className="flex h-[18px] shrink-0 items-center bg-[#bfcbdc] pr-[5px] pl-1 text-black">
      <h2 className="min-w-0 flex-1 text-[13px] whitespace-nowrap">{title}</h2>
      <button aria-label="关闭">
        <svg width="9" height="9" viewBox="0 0 9 9"><path d="M1 1l7 7M8 1L1 8" stroke="#000" strokeWidth="1.600" /></svg>
      </button>
    </div>
  );
}

// [name, value, disabled], a boolean value is a tick box
const groups = [
  { name: "约束", rows: [
    ["定位线", "墙中心线"],
    ["底部约束", "-1F"],
    ["底部偏移", "0.0"],
    ["已附着底部", false, true],
    ["底部延伸距离", "0.0", true],
    ["顶部约束", "直到标高: 0F"],
    ["无连接高度", "2850.0", true],
    ["顶部偏移", "0.0"],
    ["已附着顶部", false, true],
    ["顶部延伸距离", "0.0", true],
    ["房间边界", true, true],
    ["与体量相关", false, true],
  ] },
  { name: "结构", rows: [["结构", false, true], ["启用分析模型", false, true], ["结构用途", "非承重", true]] },
  { name: "尺寸标注", rows: [["面积", "", true], ["体积", "", true]] },
  { name: "标识数据", rows: [["图像", ""], ["注释", ""], ["标记", "", true]] },
];

function Properties() {
  return (
    <aside className="flex w-[221px] shrink-0 flex-col">
      <PaletteHeader title="属性" />
      <div className="mt-[2px] mr-[2px] flex min-h-0 flex-1 flex-col border-t-2 border-l-2 border-[#7f7f7f] bg-[#f0f0f0]">
        <button className="flex h-[72px] shrink-0 items-center border border-white bg-[#f2f2f2] pr-px pl-[3px] text-left leading-[15px] text-[#a3a3a3]">
          <svg width="66" height="66" viewBox="0 0 66 66">
            <rect x=".5" y=".5" width="65" height="65" fill="#fff" stroke="#dcdcdc" />
            <rect x="1.500" y="24.500" width="63" height="17" fill="#d6d6d6" stroke="#a8a8a8" />
          </svg>
          <span className="ml-1 flex-1">基本墙<br />剪力墙</span>
          <svg width="8" height="5" viewBox="0 0 6 4"><path d="M0 0h6L3 4z" fill="#888" /></svg>
        </button>
        <div className="flex h-[25px] shrink-0">
          <Select label="类型" value="新建 墙" className="h-[25px] w-[134px]" />
          <button className="flex flex-1 items-center justify-center gap-[2px] pr-1 text-[#999]">
            <Icon name="editType" />
            编辑类型
          </button>
        </div>
        <table className="w-full table-fixed border-collapse">
          <colgroup>
            <col className="w-[102px]" />
            <col />
            <col className="w-[11px]" />
          </colgroup>
          {groups.map((g) => (
            <tbody key={g.name}>
              <tr className="h-5 bg-[#dcdcdc]">
                <th colSpan={3} className="p-0 font-normal">
                  <button className="flex w-full items-center justify-between pr-1 pl-[2px] leading-[19px] text-black">
                    {g.name}
                    <svg width="8" height="9" viewBox="0 0 8 9" fill="none"><path d="M1 4l3-3 3 3M1 8l3-3 3 3" stroke="#111" strokeWidth="1.500" /></svg>
                  </button>
                </th>
              </tr>
              {g.rows.map(([name, value, off]) => (
                <tr key={name} className={`h-5 leading-[18px] ${off ? "text-[#858585]" : "text-[#222]"}`}>
                  <td className="border-r border-b border-dotted border-[#777] p-0 pl-[10px]">{name}</td>
                  <td className="border-r border-b border-dotted border-[#777] p-0 pl-[3px]">
                    {typeof value === "boolean" ? <Check label={name} checked={value} className="border-[#cfcfcf]" color="#aaa" /> : value}
                  </td>
                  <td className="border-r border-b border-dotted border-[#777] p-0" />
                </tr>
              ))}
            </tbody>
          ))}
        </table>
        <div className="mt-auto flex items-center justify-between pr-[2px] pb-[3px] pl-[2px]">
          <a href="#help" className="text-[#0a5fc8] underline">属性帮助</a>
          <button className="h-[19px] w-[73px] bg-[#cccccc] text-[#8c8c8c]">应用</button>
        </div>
      </div>
    </aside>
  );
}

const rowsY = { J: 177.5, H: 312.5, G: 383.5, F: 489.5, E: 667.5, C: 880.5, B: 939.5 };
const colsX = [574.5, 621.5, 791.5, 834.5, 894.5, 1048.5, 1201.5, 1320.5];
const bubbles = { ...rowsY, D: 727.5 };
const DASH = "50 12.700 12.300 12.700";

function Drawing() {
  return (
    <svg className="block h-full w-full" fill="none" role="img" aria-label="-1F">
      <g transform="translate(-231 -177)">
        <g stroke="#000" shapeRendering="crispEdges">
          {Object.values(rowsY).map((y) => (
            <path key={y} d={`M397 ${y}H1456`} strokeDasharray={DASH} strokeDashoffset="22.700" />
          ))}
          <path d="M461.700 702.500H1340" strokeDasharray={DASH} />
          <path d="M397 727.500H422M447 702.500H463M1339 702.500H1406.500M1431.500 727.500H1456" />
          {colsX.map((x) => (
            <path key={x} d={`M${x} 120.300V1040`} strokeDasharray={DASH} />
          ))}
          <path d="M1225.500 164.700V1040" strokeDasharray={DASH} />
        </g>
        <path d="M422 727.500L447 702.500M1406.500 702.500L1431.500 727.500" stroke="#000" />

        {Object.entries(bubbles).map(([letter, y]) => (
          <g key={letter}>
            <circle cx="377" cy={y - 0.5} r="19.500" fill="#fff" stroke="#000" />
            <circle cx="1476" cy={y - 0.5} r="19.500" fill="#fff" stroke="#000" />
            <g fill="#111" textAnchor="middle" className="font-['Liberation_Sans'] text-[20px]">
              <text x="376" y={y + 6}>{letter}</text>
              <text x="1475" y={y + 6}>{letter}</text>
            </g>
          </g>
        ))}

        <path d="M621 307H1207V703H1197V317H621z" fill="#000" />
        <path d="M627 312.500H1053" stroke="#5a5a5a" />
        <path d="M688 317.500h96M848 317.500h48M688 306.500h96" stroke="#b9b9b9" />

        {/* wall being placed */}
        <path d="M617.500 312.500L654 613.500l9.500-1L627.500 312z" stroke="#555" />
        <path d="M655 610l8 4M655 614l8-4" stroke="#777" />

        {/* temporary dimensions */}
        <g stroke="#8099ee">
          <path d="M627.500 311.500L682 304.500M677 305l36.500 302M663.500 612.500l56-6M671 301l11 8M708 602l11 8" />
          <path d="M838.500 312.500l-2.500 36-10 33.500-12 30.500-18 30.500-24.500 26-25.500 20.500-30 17.500-33 12.500-35 7.500" />
          <path d="M833 307l11 10M828 312.500h22M644 532l5-6 1-5M648 520l2 19" />
        </g>
        <g fill="#0a3aa8" className="font-['Liberation_Serif'] text-[28px]">
          <text transform="translate(704 413) rotate(83)" stroke="#0a3aa8" strokeWidth=".5">7700. 0</text>
          <text transform="translate(741 484) rotate(-47)">83. 00°</text>
        </g>

        <circle cx="653.500" cy="627" r="47" fill="#ffff1a" fillOpacity=".85" />
        <path d="M642 627.500h9.500M655.500 627.500H665M653.500 616v9.500M653.500 629.500V639M653 627.500h1" stroke="#16163a" strokeWidth="1.500" />
      </g>
    </svg>
  );
}

function NavigationBar() {
  return (
    <div className="absolute top-7 right-[2px] flex h-[119px] w-[35px] flex-col items-center rounded-md border-2 border-[#c6c6c6] bg-[#f4f4f4]">
      <button aria-label="关闭导航栏" className="mt-[2px] mr-px self-end">
        <svg width="9" height="9" viewBox="0 0 9 9" fill="none" stroke="#aaa"><circle cx="4.500" cy="4.500" r="3.500" fill="#ddd" /><path d="M3 3l3 3M6 3L3 6" /></svg>
      </button>
      <button aria-label="导航控制盘" className="relative mt-2">
        <Icon name="wheel" />
        <span className="absolute right-1 bottom-0 text-[10px] leading-[10px] font-bold text-[#7fa3c4]">2D</span>
      </button>
      <Caret color="#999" className="h-3" />
      <span className="h-px w-[26px] bg-[#ccc]" />
      <Tool name="zoomRegion" className="mt-1 size-6" />
      <Caret color="#999" className="mt-1 h-3" />
      <button aria-label="选项" className="mt-[5px] mr-px self-end">
        <svg width="9" height="9" viewBox="0 0 9 9" fill="none" stroke="#aaa"><circle cx="4.500" cy="4.500" r="3.500" fill="#ddd" /><path d="M2.500 4.500h4" /></svg>
      </button>
    </div>
  );
}

const viewTools = ["detail", "style", "sun", "shadow", "crop", "cropShow", "glasses", "reveal", "tmp", "tmp2", "constrain"];

function Canvas() {
  return (
    <main className="mb-px ml-[5px] flex min-w-0 flex-1 flex-col border-t border-l border-[#555]">
      <div className="flex min-h-0 flex-1">
        <div className="relative min-w-0 flex-1 overflow-hidden bg-white">
          <Drawing />
          <div className="absolute top-1 right-1 flex h-5 items-center gap-[5px]">
            <button aria-label="最小化"><svg width="13" height="13" viewBox="0 0 13 13"><path d="M1 7.500h11v3H1z" fill="#fff" stroke="#555" /></svg></button>
            <button aria-label="还原"><svg width="12" height="13" viewBox="0 0 12 13" fill="none" stroke="#444"><path d="M3 4V1.500h8v8H9M1.500 4.500h7v7h-7zM4 7h2v2H4z" /></svg></button>
            <button aria-label="关闭"><svg width="13" height="13" viewBox="0 0 13 13" fill="#fff" stroke="#555"><path d="M1.500 1.500h3l2 3 2-3h3l-3 5 3 5h-3l-2-3-2 3h-3l3-5z" /></svg></button>
          </div>
          <NavigationBar />
        </div>
        <div className="flex w-[17px] shrink-0 flex-col items-center bg-[#f0f0f0] py-1">
          <Chevron dir="up" />
          <span className="flex-1" />
          <span className="h-[17px] w-[15px] bg-[#cdcdcd]" />
          <span className="flex-1" />
          <Chevron />
        </div>
      </div>
      <div className="flex h-4 shrink-0 items-center bg-[#f0f0f0] pl-5">
        <span className="w-[56px] font-['Liberation_Sans'] whitespace-pre text-black">1  :  100</span>
        {viewTools.map((n) => (
          <Tool key={n} name={n} className="h-4 w-[21px]" />
        ))}
        <span className="ml-[2px]"><Chevron dir="left" /></span>
        <span className="flex-1" />
        <span className="h-4 w-[17px] bg-[#cdcdcd]" />
        <span className="flex-1" />
        <Chevron dir="right" />
        <svg width="20" height="12" viewBox="0 0 20 12" fill="#bbb"><path d="M15 0h2v2h-2zM11 4h2v2h-2zM15 4h2v2h-2zM7 8h2v2H7zM11 8h2v2h-2zM15 8h2v2h-2z" /></svg>
      </div>
    </main>
  );
}

// level, text, state (open / shut / leaf), icon, last of its branch
const tree = [
  [0, "视图 (全部)", "open", "views"],
  [1, "结构平面", "shut"],
  [1, "楼层平面", "open"],
  [2, "-1F", "leaf"],
  [2, "-1F-1", "leaf"],
  [2, "0F", "leaf"],
  [2, "F1", "leaf"],
  [2, "F2", "leaf"],
  [2, "F3", "leaf"],
  [2, "场地", "leaf", null, true],
  [1, "天花板平面", "shut"],
  [1, "三维视图", "open"],
  [2, "{3D}", "leaf"],
  [2, "{三维}", "leaf", null, true],
  [1, "立面 (建筑立面)", "open", null, true],
  [2, "东", "leaf"],
  [2, "北", "leaf"],
  [2, "南", "leaf"],
  [2, "西", "leaf", null, true],
  [0, "图例", "leaf", "legend"],
  [0, "明细表/数量", "open", "schedule"],
  [1, "窗明细表", "leaf"],
  [1, "门明细表", "leaf", null, true],
  [0, "图纸 (全部)", "leaf", "sheet"],
  [0, "族", "open", "family"],
  ...["停车场", "场地", "坡道", "填充图案", "墙", "天花板", "屋顶", "常规模型", "幕墙嵌板", "幕墙竖梃", "幕墙系统", "柱", "栏杆扶手", "植物", "楼板", "楼梯"].map((t) => [1, t, "shut"]),
  [1, "注释符号", "open"],
];

function Guides({ level, state, first, last, parentLast }) {
  const x = level * 20 + 8.5;
  const w = level === 0 ? 20 : level * 20 + 26;
  return (
    <svg width={w} height="20" viewBox={`0 0 ${w} 20`} fill="none" className="shrink-0" shapeRendering="crispEdges">
      <g stroke="#999" strokeDasharray="1 1">
        {level > 0 && <path d="M8.500 0v20" />}
        {level > 1 && !parentLast && <path d="M28.500 0v20" />}
        <path d={`M${x} ${first ? 10 : 0}V${last ? 10 : 20}`} />
        {level > 0 && state === "open" && <path d={`M${x + 20} 16V20`} />}
        <path d={`M${x} 10.500H${w - 3}`} />
      </g>
      {state !== "leaf" && (
        <>
          <rect x={x - 4} y="6.500" width="8" height="8" fill="#f5f5f8" stroke="#8a8a94" />
          <path d={`M${x - 2.5} 10.500h5`} stroke="#33335a" />
          {state === "shut" && <path d={`M${x} 8v5`} stroke="#33335a" />}
        </>
      )}
    </svg>
  );
}

function Browser() {
  const [active, setActive] = useState(3);
  return (
    <aside className="mr-[3px] ml-[5px] flex w-[211px] shrink-0 flex-col">
      <PaletteHeader title="项目浏览器 - 02-小别墅-标高轴..." />
      <div className="mt-[2px] flex min-h-0 flex-1 flex-col border-t-2 border-l-2 border-[#7f7f7f] bg-white">
        <div className="flex min-h-0 flex-1">
          <ul className="min-w-0 flex-1 overflow-hidden">
            {tree.map(([level, text, state, icon, last], i) => (
              <li key={i}>
                <button onClick={() => setActive(i)} className="flex h-5 items-center whitespace-nowrap text-black">
                  <Guides level={level} state={state} first={i === 0} last={last} parentLast={i > 14} />
                  {icon && <span className="mr-[6px] flex w-4"><Icon name={icon} /></span>}
                  <span className={i === active ? "-ml-[3px] bg-[#e2e2e2] px-[3px] leading-5 font-bold" : ""}>{text}</span>
                </button>
              </li>
            ))}
          </ul>
          <div className="flex w-4 shrink-0 flex-col items-center bg-[#f0f0f0] py-1">
            <Chevron dir="up" />
            <span className="mt-1 h-[259px] w-full bg-[#cdcdcd]" />
            <span className="flex-1" />
            <Chevron />
          </div>
        </div>
        <div className="flex h-4 shrink-0 items-center bg-[#f0f0f0] pr-[18px] pl-[3px]">
          <Chevron dir="left" />
          <span className="ml-1 h-[15px] w-[146px] bg-[#cdcdcd]" />
          <span className="flex-1" />
          <Chevron dir="right" />
        </div>
      </div>
    </aside>
  );
}

function StatusBar() {
  return (
    <footer className="flex h-[31px] shrink-0 items-center border-t border-b-2 border-t-[#8a8a8a] border-b-[#1aa5ee] bg-[#d4d4d4] pr-[22px] pb-[2px] text-black">
      <p className="w-[48%] shrink-0 truncate pl-[6px]">输入墙终点。. (SZ) 关闭环。. 单击空格翻转方向。</p>
      <Tool name="users" className="ml-1 h-6 w-[31px]" />
      <Select label="工作集" value="" className="ml-[6px] h-[18px] w-[204px]" bg="bg-white" />
      <Tool name="request" className="ml-1 size-6" />
      <span className="ml-[2px] w-7">:0</span>
      <Tool name="options" />
      <Tool name="design" className="ml-[2px] size-6" />
      <Select label="设计选项" value="主模型" className="ml-[4px] h-[18px] w-[204px]" bg="bg-white" />
      <div className="ml-auto flex items-center">
        {["selLink", "selUnder", "selPin", "selFace", "drag", "gear"].map((n) => (
          <Tool key={n} name={n} className="h-6 w-[26px]" />
        ))}
        <Tool name="funnel" className="h-6 w-[22px]" />
        <span className="w-[73px]">:0</span>
      </div>
    </footer>
  );
}

export default function App() {
  return (
    <div className="flex h-screen flex-col overflow-hidden bg-[#d4d4d4] font-['Open_Sans','Noto_Sans_CJK_SC',sans-serif] text-xs">
      <TitleBar />
      <Tabs />
      <Ribbon />
      <OptionsBar />
      <div className="flex min-h-0 flex-1 bg-[#f0f0f0] pl-1">
        <Properties />
        <Canvas />
        <Browser />
      </div>
      <StatusBar />
    </div>
  );
}
